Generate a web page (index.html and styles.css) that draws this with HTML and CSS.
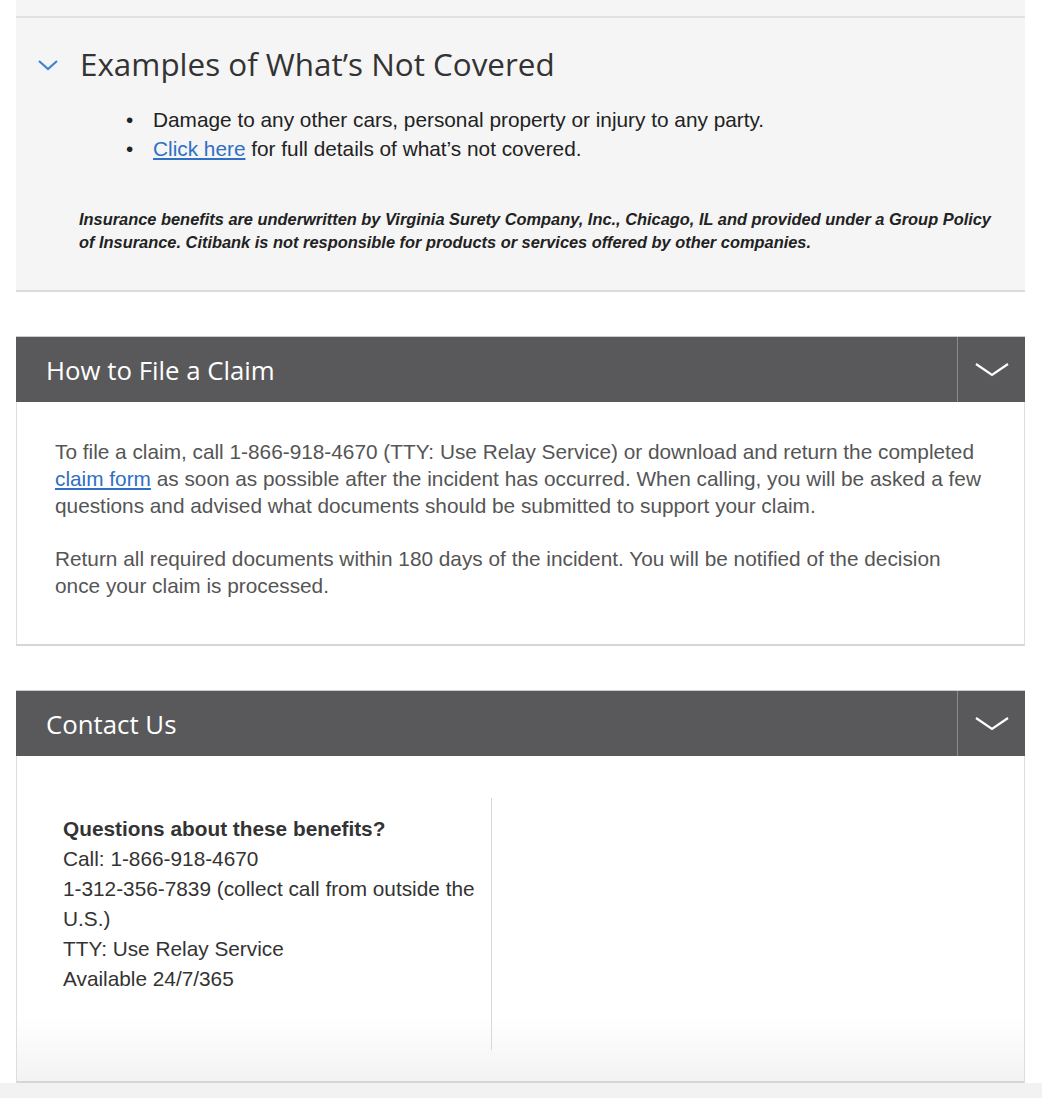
FILE: index.html
```html
<!DOCTYPE html>
<html lang="en">
<head>
<meta charset="utf-8">
<title>Benefits</title>
<link rel="stylesheet" href="styles.css">
</head>
<body>
<div class="page">
  <div class="prev-tail"></div>
  <section class="notcovered">
    <h2 class="nc-title">
      <svg class="nc-chevron" width="22" height="12" viewBox="0 0 22 12"><path d="M2 2 L11 10 L20 2" fill="none" stroke="#3d84d4" stroke-width="2.2"/></svg>
      <span>Examples of What’s Not Covered</span>
    </h2>
    <ul class="nc-list">
      <li>Damage to any other cars, personal property or injury to any party.</li>
      <li><a href="#">Click here</a> for full details of what’s not covered.</li>
    </ul>
    <p class="disclaimer">Insurance benefits are underwritten by Virginia Surety Company, Inc., Chicago, IL and provided under a Group Policy of Insurance. Citibank is not responsible for products or services offered by other companies.</p>
  </section>

  <section class="panel claim">
    <header class="panel-head">
      <h3 class="panel-title">How to File a Claim</h3>
      <button class="panel-toggle" aria-label="Toggle"><svg width="36" height="16" viewBox="0 0 36 16"><path d="M2 2 L18 13 L34 2" fill="none" stroke="#fff" stroke-width="2.2"/></svg></button>
    </header>
    <div class="panel-body">
      <p>To file a claim, call 1-866-918-4670 (TTY: Use Relay Service) or download and return the completed <a href="#">claim form</a> as soon as possible after the incident has occurred. When calling, you will be asked a few questions and advised what documents should be submitted to support your claim.</p>
      <p>Return all required documents within 180 days of the incident. You will be notified of the decision once your claim is processed.</p>
    </div>
  </section>

  <section class="panel contact">
    <header class="panel-head">
      <h3 class="panel-title">Contact Us</h3>
      <button class="panel-toggle" aria-label="Toggle"><svg width="36" height="16" viewBox="0 0 36 16"><path d="M2 2 L18 13 L34 2" fill="none" stroke="#fff" stroke-width="2.2"/></svg></button>
    </header>
    <div class="panel-body contact-body">
      <div class="contact-col">
        <p class="contact-q">Questions about these benefits?</p>
        <p>Call: 1-866-918-4670</p>
        <p>1-312-356-7839 (collect call from outside the U.S.)</p>
        <p>TTY: Use Relay Service</p>
        <p>Available 24/7/365</p>
      </div>
    </div>
  </section>
</div>
<div class="page-foot"></div>
</body>
</html>
```

FILE: styles.css
```css
html, body {
  margin: 0;
  padding: 0;
  background: #fff;
}
body {
  font-family: "Liberation Sans", Arial, sans-serif;
}
.page {
  width: 1009px;
  margin-left: 16px;
}
.prev-tail {
  height: 16px;
  background: #f5f5f5;
}
.notcovered {
  background: #f5f5f5;
  border-top: 2px solid #e2e2e2;
  border-bottom: 2px solid #dcdcdc;
  padding: 24px 0 36px 21px;
}
.nc-title {
  display: flex;
  align-items: center;
  gap: 21px;
  margin: 0;
  font-family: "Open Sans", sans-serif;
  font-weight: 400;
  font-size: 31.4px;
  color: #333;
}
.nc-chevron {
  display: block;
  margin-top: 2px;
}
.nc-list {
  list-style: none;
  margin: 20px 0 0 0;
  padding-left: 116px;
  font-size: 20.8px;
  line-height: 29px;
  color: #222;
}
.nc-list li::before {
  content: "•";
  display: inline-block;
  width: 27px;
  margin-left: -27px;
}
.nc-list a, .panel-body a {
  color: #2f6fc4;
  text-decoration: underline;
}
.disclaimer {
  margin: 45px 0 0 42px;
  max-width: 918px;
  font-size: 16.4px;
  line-height: 23px;
  font-weight: bold;
  font-style: italic;
  color: #222;
}
.panel {
  margin-top: 44px;
}
.panel-head {
  display: flex;
  align-items: stretch;
  height: 65px;
  background: #59595b;
  border-top: 1px solid #ccc;
}
.panel-title {
  flex: 1;
  margin: 0;
  padding-left: 30px;
  display: flex;
  align-items: center;
  font-family: "Open Sans", sans-serif;
  font-weight: 400;
  font-size: 25.8px;
  color: #fff;
}
.panel-toggle {
  width: 68px;
  border: 0;
  border-left: 1px solid #8a8a8c;
  background: transparent;
  padding: 0;
  display: flex;
  align-items: center;
  justify-content: center;
}
.panel-toggle svg {
  display: block;
}
.panel-body {
  border: 1px solid #dedede;
  border-top: 0;
  border-bottom: 2px solid #d6d6d6;
  background: #fff;
  padding: 36px 36px 45px 38px;
  font-size: 20.8px;
  line-height: 27px;
  color: #555;
}
.panel-body p {
  margin: 0;
}
.panel-body p + p {
  margin-top: 26px;
}
.contact-body {
  padding: 42px 0 31px 46px;
  background: linear-gradient(to bottom, #fff 0%, #fff 80%, #f3f3f3 100%);
  color: #333;
  line-height: 30px;
}
.contact-col {
  width: 412px;
  padding: 16px 16px 56px 0;
  border-right: 1px solid #d8d8d8;
}
.contact-body p + p {
  margin-top: 0;
}
.contact-q {
  font-weight: bold;
}
.page-foot {
  height: 15px;
  background: #f2f2f2;
}
```
